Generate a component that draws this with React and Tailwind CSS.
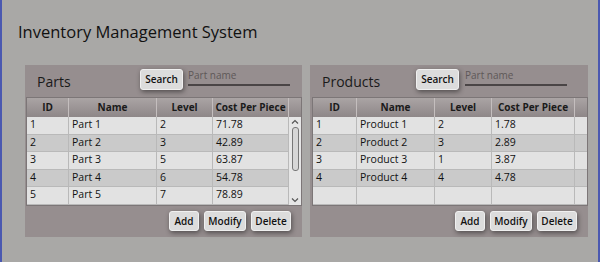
import React from 'react';

const parts = [
  ['1', 'Part 1', '2', '71.78'],
  ['2', 'Part 2', '3', '42.89'],
  ['3', 'Part 3', '5', '63.87'],
  ['4', 'Part 4', '6', '54.78'],
  ['5', 'Part 5', '7', '78.89'],
];

const products = [
  ['1', 'Product 1', '2', '1.78'],
  ['2', 'Product 2', '3', '2.89'],
  ['3', 'Product 3', '1', '3.87'],
  ['4', 'Product 4', '4', '4.78'],
  ['', '', '', ''],
];

function Btn({ children, className = '' }) {
  return (
    <button
      className={`h-[20px] rounded-[3px] bg-[#dcdcdc] text-[10px] font-semibold text-[#111] shadow-[1px_2px_5px_rgba(0,0,0,0.45)] border border-[#f0f0f0] whitespace-nowrap ${className}`}
    >
      {children}
    </button>
  );
}

function Table({ rows, cols, scroll }) {
  const heads = ['ID', 'Name', 'Level', 'Cost Per Piece'];
  return (
    <div className="relative border border-[#7c7677]">
      <div className={`grid ${cols} h-[19px] bg-gradient-to-b from-[#aaa4a4] to-[#8e8788]`}>
        {heads.map((h) => (
          <div key={h} className="flex items-center justify-center whitespace-nowrap border-r border-[#c4bebe] text-[10px] font-bold text-[#1a1a1a]">
            {h}
          </div>
        ))}
        <div />
      </div>
      {rows.map((r, i) => (
        <div key={i} className={`grid ${cols} h-[17.5px] ${i % 2 === 0 ? 'bg-[#e2e2e2]' : 'bg-[#cacaca]'}`}>
          {r.map((c, j) => (
            <div key={j} className="flex items-center whitespace-nowrap border-r border-b border-[#b9b9b9] pl-[3px] text-[10.5px] text-[#111]">
              {c}
            </div>
          ))}
          <div className={scroll ? 'bg-[#e6e6e6]' : 'border-b border-[#b9b9b9]'} />
        </div>
      ))}
      {scroll && (
        <div className="absolute right-0 top-[19px] bottom-0 w-[12px] bg-[#e6e6e6] flex flex-col items-center">
          <svg width="8" height="6" viewBox="0 0 8 6" className="mt-[2px]">
            <path d="M1 4.5 L4 1.5 L7 4.5" fill="none" stroke="#555" strokeWidth="1.2" />
          </svg>
          <div className="mt-[2px] h-[44px] w-[7px] rounded-[3px] border border-[#777] bg-[#d6d6d6]" />
          <div className="flex-1" />
          <svg width="8" height="6" viewBox="0 0 8 6" className="mb-[2px]">
            <path d="M1 1.5 L4 4.5 L7 1.5" fill="none" stroke="#555" strokeWidth="1.2" />
          </svg>
        </div>
      )}
    </div>
  );
}

function Panel({ title, rows, cols, scroll, searchX, inputX, width, pad }) {
  return (
    <div className={`${width} h-[172px] bg-[#968e8f] flex flex-col`}>
      <div className="h-[32px] flex items-center relative">
        <span className="pl-[12px] text-[14px] text-[#1a1a1a]">{title}</span>
        <Btn className={`absolute top-[4px] ${searchX} w-[43px] h-[21px]`}>Search</Btn>
        <div className={`absolute top-[3px] ${inputX} w-[102px] h-[18px] border-b-2 border-[#4a4546] text-[10px] text-[#5e5858]`}>
          Part name
        </div>
      </div>
      <div className={pad}>
        <Table rows={rows} cols={cols} scroll={scroll} />
      </div>
      <div className="flex-1 flex items-center justify-end gap-[5px] pr-[11px]">
        <Btn className="w-[30px]">Add</Btn>
        <Btn className="w-[42px]">Modify</Btn>
        <Btn className="w-[40px]">Delete</Btn>
      </div>
    </div>
  );
}

export default function App() {
  return (
    <div
      className="w-[600px] h-[262px] bg-[#a9a8a6] border-l-2 border-r-2 border-[#4a58b0] overflow-hidden"
      style={{ fontFamily: '"Open Sans", "Noto Sans", sans-serif' }}
    >
      <div className="pl-[16px] pt-[20px] text-[16.5px] leading-[24px] text-[#111]">Inventory Management System</div>
      <div className="flex gap-[8px] pl-[23px] pt-[21px]">
        <Panel
          title="Parts"
          rows={parts}
          cols="grid-cols-[42px_88px_56px_76px_12px]"
          scroll
          searchX="left-[115px]"
          inputX="left-[163px]"
          width="w-[277px]"
          pad="pl-[1px]"
        />
        <Panel
          title="Products"
          rows={products}
          cols="grid-cols-[44px_78px_57px_83px_12px]"
          searchX="left-[106px]"
          inputX="left-[155px]"
          width="w-[278px]"
          pad="pl-[2px]"
        />
      </div>
    </div>
  );
}
